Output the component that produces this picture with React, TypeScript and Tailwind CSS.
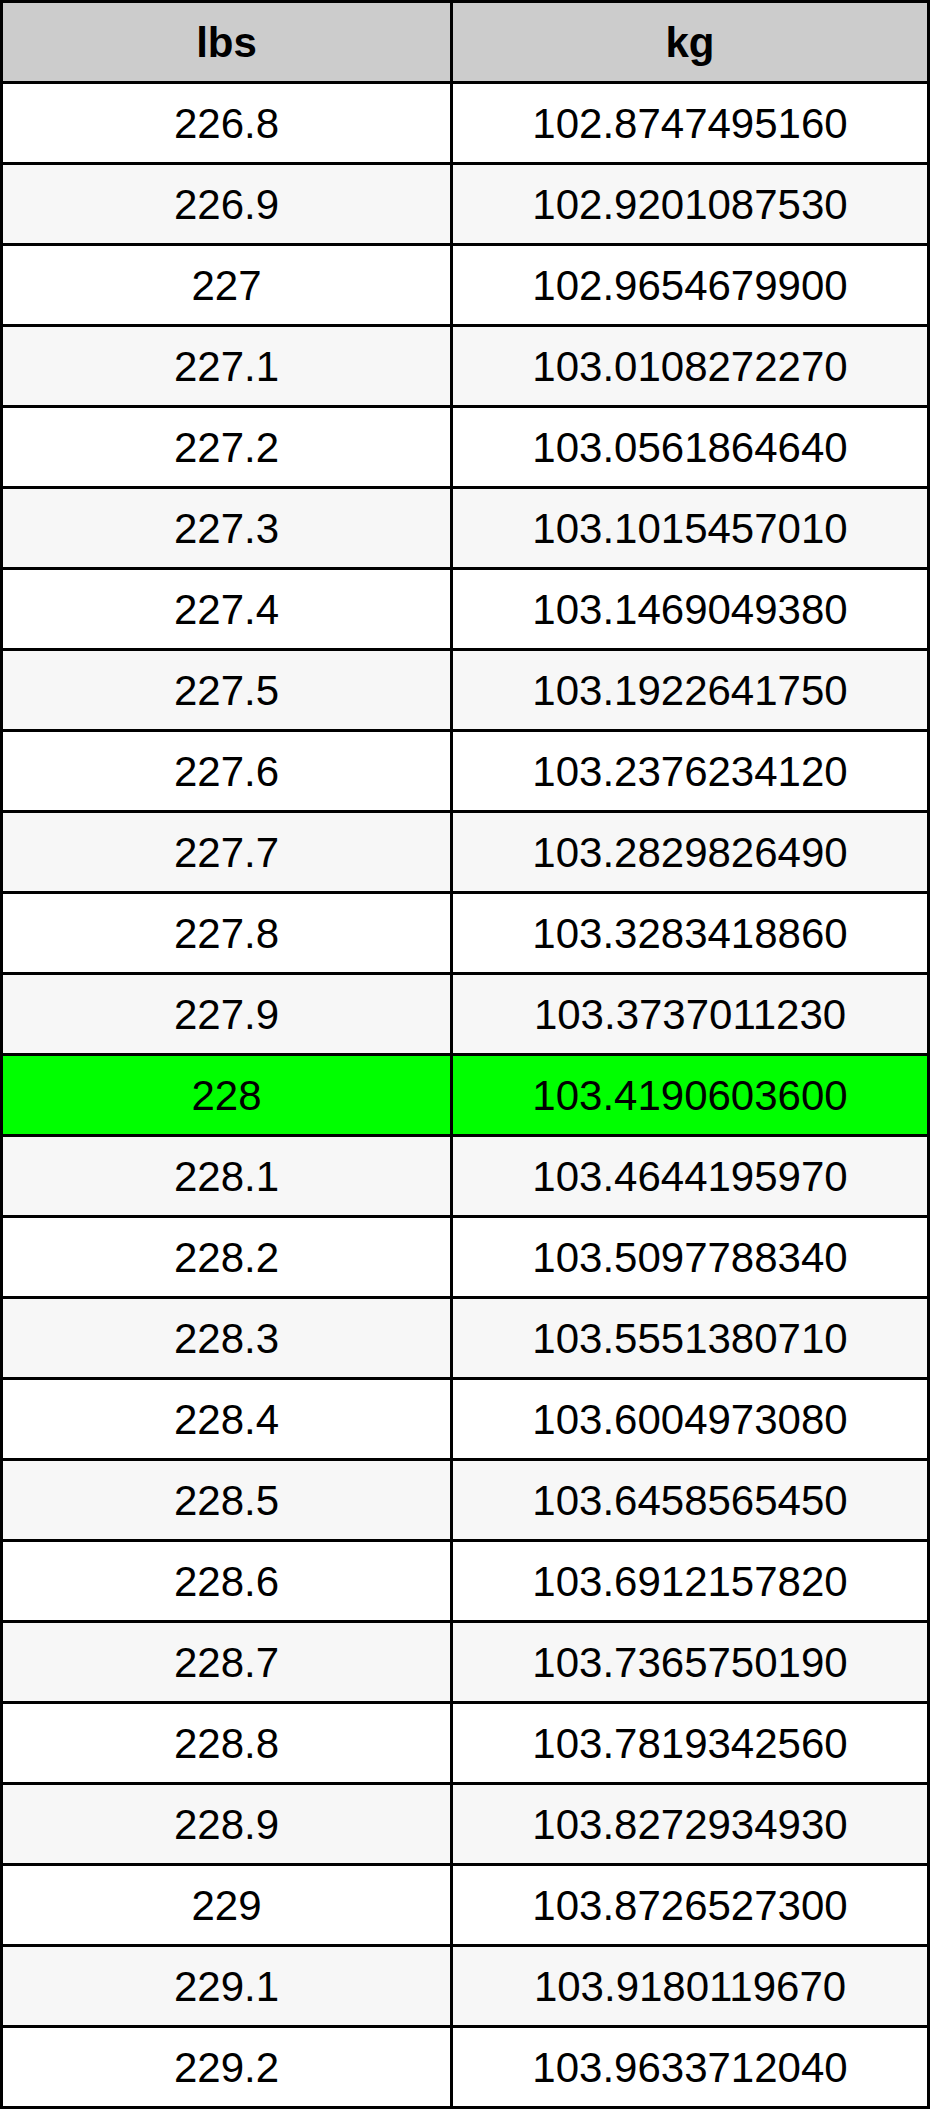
const rows: [string, string][] = [
  ["226.8", "102.8747495160"],
  ["226.9", "102.9201087530"],
  ["227", "102.9654679900"],
  ["227.1", "103.0108272270"],
  ["227.2", "103.0561864640"],
  ["227.3", "103.1015457010"],
  ["227.4", "103.1469049380"],
  ["227.5", "103.1922641750"],
  ["227.6", "103.2376234120"],
  ["227.7", "103.2829826490"],
  ["227.8", "103.3283418860"],
  ["227.9", "103.3737011230"],
  ["228", "103.4190603600"],
  ["228.1", "103.4644195970"],
  ["228.2", "103.5097788340"],
  ["228.3", "103.5551380710"],
  ["228.4", "103.6004973080"],
  ["228.5", "103.6458565450"],
  ["228.6", "103.6912157820"],
  ["228.7", "103.7365750190"],
  ["228.8", "103.7819342560"],
  ["228.9", "103.8272934930"],
  ["229", "103.8726527300"],
  ["229.1", "103.9180119670"],
  ["229.2", "103.9633712040"],
];

const cell =
  "flex items-center justify-center border-r-[3px] border-b-[3px] border-black";

const App = () => {
  return (
    <div className="w-[930px] bg-white font-['Liberation_Sans',Arial,sans-serif] text-[42px] text-black">
      <div className="flex flex-col border-t-[3px] border-l-[3px] border-black">
        <div className="flex h-[81px] bg-[#cccccc] font-bold">
          <div className={`${cell} w-[450px]`}>lbs</div>
          <div className={`${cell} w-[477px]`}>kg</div>
        </div>
        {rows.map(([lbs, kg], i) => {
          const bg =
            lbs === "228"
              ? "bg-[#00ff00]"
              : i % 2 === 1
                ? "bg-[#f7f7f7]"
                : "bg-white";
          return (
            <div key={lbs} className={`flex h-[81px] ${bg}`}>
              <div className={`${cell} w-[450px]`}>{lbs}</div>
              <div className={`${cell} w-[477px]`}>{kg}</div>
            </div>
          );
        })}
      </div>
    </div>
  );
};

export default App;
